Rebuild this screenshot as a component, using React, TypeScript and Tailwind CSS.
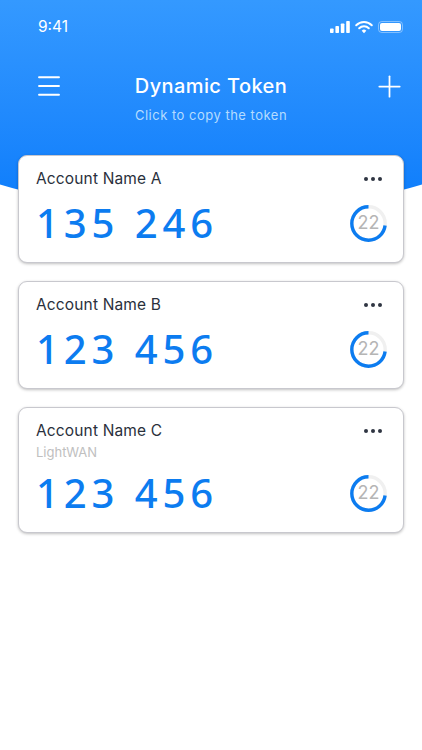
import { Menu, Plus } from "lucide-react";

const font = "font-['Inter','Noto_Sans','Liberation_Sans',sans-serif]";

function StatusIcons() {
  return (
    <svg width="74" height="14" viewBox="0 0 74 14" fill="none">
      <g fill="#fff">
        <rect x="0" y="8.5" width="3.6" height="4.5" rx="0.8" />
        <rect x="5.4" y="6" width="3.6" height="7" rx="0.8" />
        <rect x="10.8" y="3.5" width="3.6" height="9.5" rx="0.8" />
        <rect x="16.2" y="1" width="3.6" height="12" rx="0.8" />
      </g>
      <path d="M26.2 5.2a11 11 0 0 1 15.6 0" stroke="#fff" strokeWidth="2" strokeLinecap="round" />
      <path d="M29.2 8.3a6.8 6.8 0 0 1 9.6 0" stroke="#fff" strokeWidth="2" strokeLinecap="round" />
      <path d="M34 13.2l-2.3-2.4a3.2 3.2 0 0 1 4.6 0z" fill="#fff" />
      <rect x="48.5" y="1.5" width="24" height="11" rx="3.2" stroke="#fff" strokeOpacity="0.4" />
      <rect x="50" y="3" width="21" height="8" rx="2" fill="#fff" />
    </svg>
  );
}

function Countdown({ value }: { value: number }) {
  return (
    <div className="relative size-[37px] shrink-0">
      <svg viewBox="0 0 37 37" className="size-[37px] -rotate-90">
        <circle cx="18.5" cy="18.5" r="16.7" fill="none" stroke="#f0f0f0" strokeWidth="3.4" />
        <circle
          cx="18.5"
          cy="18.5"
          r="16.7"
          fill="none"
          stroke="#0c7cf0"
          strokeWidth="3.4"
          pathLength={100}
          strokeDasharray="0 27 73 0"
        />
      </svg>
      <span className="absolute inset-0 flex items-center justify-center text-[18px] leading-none text-[#b5b5b5]">
        {value}
      </span>
    </div>
  );
}

function TokenCard({ name, sub, token }: { name: string; sub?: string; token: string }) {
  return (
    <div className="rounded-[9px] border border-[#c8c8ce] bg-white pl-[17px] pr-[16px] pt-[12px] pb-[11px] shadow-[0_1px_3px_rgba(0,0,0,0.25)]">
      <div className="flex h-[22px] items-center justify-between">
        <span className="text-[15.5px] leading-[22px] tracking-[0.15px] text-[#2a303c]">{name}</span>
        <span className="mb-[1px] mr-[5px] flex gap-[3px]">
          <i className="size-[4px] rounded-full bg-[#2f3542]" />
          <i className="size-[4px] rounded-full bg-[#2f3542]" />
          <i className="size-[4px] rounded-full bg-[#2f3542]" />
        </span>
      </div>
      {sub && <div className="h-[18px] pt-[1px] text-[13px] leading-[18px] text-[#c0c0c0]">{sub}</div>}
      <div className="mt-[5px] flex h-[56px] items-center justify-between">
        <span className="font-['Noto_Sans',sans-serif] text-[40px] font-medium leading-none tracking-[4.9px] text-[#0c7cf0]">
          {token}
        </span>
        <Countdown value={22} />
      </div>
    </div>
  );
}

export default function App() {
  return (
    <div className={`${font} h-[750px] w-[422px] overflow-hidden bg-white`}>
      <div className="h-[155px]">
        <header className="ml-[-89px] h-[211px] w-[600px] rounded-b-[300px_92px] bg-gradient-to-b from-[#3499ff] to-[#0a7cfb] px-[89px]">
          <div className="flex h-[54px] items-center justify-between pl-[38px] pr-[18px]">
            <span className="text-[15.5px] text-white">9:41</span>
            <StatusIcons />
          </div>
          <div className="mt-[14px] grid h-[36px] grid-cols-[1fr_auto_1fr] items-center px-[14px]">
            <Menu className="ml-[20px] size-[30px] text-white" strokeWidth={1.5} />
            <h1 className="text-[20px] font-medium leading-none tracking-[0.4px] text-white">Dynamic Token</h1>
            <Plus className="mr-[1px] size-[35px] justify-self-end text-white" strokeWidth={1.2} />
          </div>
          <p className="mt-[2px] text-center text-[13px] leading-[18px] tracking-[0.5px] text-[#b5dcff]">
            Click to copy the token
          </p>
        </header>
      </div>
      <main className="relative flex flex-col gap-[18px] px-[18px]">
        <TokenCard name="Account Name A" token="135 246" />
        <TokenCard name="Account Name B" token="123 456" />
        <TokenCard name="Account Name C" sub="LightWAN" token="123 456" />
      </main>
    </div>
  );
}
